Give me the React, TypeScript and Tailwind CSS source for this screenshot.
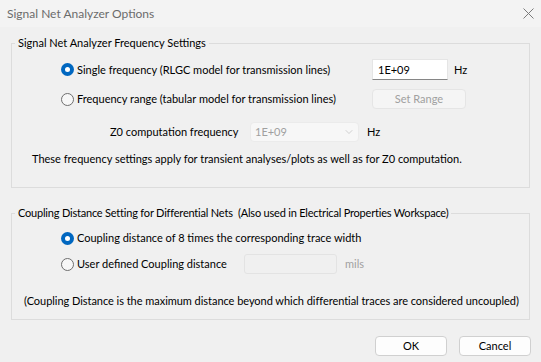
import { ChevronDown } from 'lucide-react';

function Radio({ checked, label }: { checked?: boolean; label: string }) {
  return (
    <label className="flex items-center gap-[3px] whitespace-nowrap">
      {checked ? (
        <span className="flex h-[13px] w-[13px] shrink-0 items-center justify-center rounded-full bg-[#0067c0]">
          <span className="h-[5px] w-[5px] rounded-full bg-white" />
        </span>
      ) : (
        <span className="h-[13px] w-[13px] shrink-0 rounded-full border border-[#6e6e6e] bg-[#f7f7f7]" />
      )}
      <span>{label}</span>
    </label>
  );
}

export default function App() {
  return (
    <div className="flex h-[362px] w-[541px] flex-col overflow-hidden whitespace-nowrap bg-[#f0f0f0] text-[11px] leading-[16px] text-black [font-family:Lato,'Liberation_Sans',sans-serif]">
      <div className="flex h-[27px] shrink-0 items-center justify-between bg-[#f3f3f3] pl-[7px] pr-[7px]">
        <span className="text-[12px] text-[#6b6b6b]">Signal Net Analyzer Options</span>
        <svg width="11" height="11" viewBox="0 0 11 11">
          <path d="M0.5 0.5 L10.5 10.5 M10.5 0.5 L0.5 10.5" stroke="#7a7a7a" strokeWidth="1" fill="none" />
        </svg>
      </div>

      <div className="flex flex-col px-[11px] pt-[8px]">
        <fieldset className="border border-[#dcdcdc] pb-[20px]">
          <legend className="ml-[3px] px-[3px]">Signal Net Analyzer Frequency Settings</legend>
          <div className="pl-[49px]">
            <div className="mt-[8px] flex h-[21px] items-center">
              <div className="w-[311px]">
                <Radio checked label="Single frequency (RLGC model for transmission lines)" />
              </div>
              <div className="flex h-[21px] w-[76px] items-center border border-[#e5e5e5] border-b-[#868686] bg-white px-[5px]">1E+09</div>
              <span className="ml-[6px]">Hz</span>
            </div>
            <div className="mt-[9px] flex h-[20px] items-center">
              <div className="w-[311px]">
                <Radio label="Frequency range (tabular model for transmission lines)" />
              </div>
              <div className="flex h-[20px] w-[94px] items-center justify-center rounded-[4px] border border-[#e5e5e5] bg-[#f5f5f5] text-[#a0a0a0]">Set Range</div>
            </div>
            <div className="mt-[13px] flex h-[20px] items-center">
              <span className="ml-[49px] w-[140px]">Z0 computation frequency</span>
              <div className="flex h-[20px] w-[109px] items-center justify-between rounded-[4px] border border-[#ebebeb] bg-[#f7f7f7] pl-[4px] pr-[3px] text-[#a0a0a0]">
                <span>1E+09</span>
                <ChevronDown size={12} strokeWidth={1.2} color="#b5b5b5" />
              </div>
              <span className="ml-[8px]">Hz</span>
            </div>
          </div>
          <p className="mt-[9px] pl-[20px]">
            These frequency settings apply for transient analyses/plots as well as for Z0 computation.
          </p>
        </fieldset>

        <fieldset className="mt-[17px] border border-[#dcdcdc] pb-[10px]">
          <legend className="ml-[3px] px-[3px] tracking-[-0.2px]">
            Coupling Distance Setting for Differential Nets&nbsp; (Also used in Electrical Properties Workspace)
          </legend>
          <div className="pl-[49px]">
            <div className="mt-[9px] flex h-[16px] items-center">
              <Radio checked label="Coupling distance of 8 times the corresponding trace width" />
            </div>
            <div className="mt-[8px] flex h-[20px] items-center">
              <div className="w-[183px]">
                <Radio label="User defined Coupling distance" />
              </div>
              <div className="h-[20px] w-[93px] rounded-[3px] border border-[#e3e3e3] bg-[#f0f0f0]" />
              <span className="ml-[8px] text-[#a0a0a0]">mils</span>
            </div>
          </div>
          <p className="mt-[19px] pl-[12px] tracking-[-0.04px]">
            (Coupling Distance is the maximum distance beyond which differential traces are considered uncoupled)
          </p>
        </fieldset>

        <div className="mr-[-1px] mt-[16px] flex justify-end gap-[12px]">
          <button className="h-[20px] w-[72px] rounded-[4px] border border-[#d0d0d0] bg-[#fdfdfd]">OK</button>
          <button className="h-[20px] w-[72px] rounded-[4px] border border-[#d0d0d0] bg-[#fdfdfd]">Cancel</button>
        </div>
      </div>
    </div>
  );
}
